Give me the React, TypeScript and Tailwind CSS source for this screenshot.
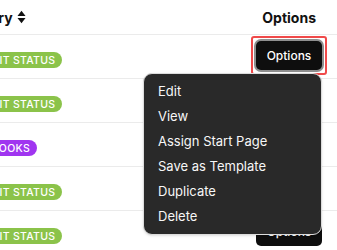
import React from "react";

const rows = [
  { label: "EDIT STATUS", color: "bg-[#8bc34a]" },
  { label: "EDIT STATUS", color: "bg-[#8bc34a]" },
  { label: "EBOOKS", color: "bg-[#a035f0]" },
  { label: "EDIT STATUS", color: "bg-[#8bc34a]" },
  { label: "EDIT STATUS", color: "bg-[#8bc34a]" },
];

const menuItems = ["Edit", "View", "Assign Start Page", "Save as Template", "Duplicate", "Delete"];

function SortIcon() {
  return (
    <svg width="9" height="14" viewBox="0 0 9 14" className="block">
      <path d="M0.5 6 L4.5 0.8 L8.5 6 Z" fill="#111" />
      <path d="M0.5 8 L8.5 8 L4.5 13.2 Z" fill="#111" />
    </svg>
  );
}

export default function App() {
  return (
    <div className="relative w-[337px] h-[250px] overflow-hidden bg-white font-['Inter',sans-serif] text-[#111]">
      <div className="-ml-[55px] w-[392px]">
        <div className="flex h-[35px] items-center border-b border-[#ebebeb]">
          <div className="pl-[4px] flex items-center gap-[4px] text-[14px] font-bold">
            <span>Category</span>
            <SortIcon />
          </div>
          <div className="flex-1" />
          <div className="pr-[21px] text-[14px] font-bold">Options</div>
        </div>
        {rows.map((r, i) => (
          <div key={i} className="flex h-[44px] items-center border-b border-[#ebebeb]">
            <div className="pl-[33px] mt-[2px]">
              <span
                className={`${r.color} inline-flex h-[16px] items-center rounded-full px-[7px] text-[10.5px] font-medium tracking-[0.3px] text-white`}
              >
                {r.label}
              </span>
            </div>
            <div className="flex-1" />
            <div className="pr-[10px] -mt-[2px]">
              <div
                className={`rounded-[3px] border-2 p-[3px] ${i === 0 ? "border-[#f04a4a]" : "border-transparent"}`}
              >
                <button
                  className={`flex h-[29px] w-[66px] items-center justify-center rounded-[5px] bg-[#0e0e0e] text-[12px] font-medium text-white ${
                    i === 0 ? "shadow-[0_0_0_2px_#8f8f8f]" : ""
                  }`}
                >
                  Options
                </button>
              </div>
            </div>
          </div>
        ))}
      </div>
      <div className="absolute left-[143px] top-[73px] w-[179px] h-[162px] rounded-[9px] border border-[#dcdcdc] bg-[#292929] py-[5px] shadow-sm">
        {menuItems.map((m) => (
          <div key={m} className="px-[14px] text-[13px] leading-[25px] text-[#f7f7f7]">
            {m}
          </div>
        ))}
      </div>
    </div>
  );
}
